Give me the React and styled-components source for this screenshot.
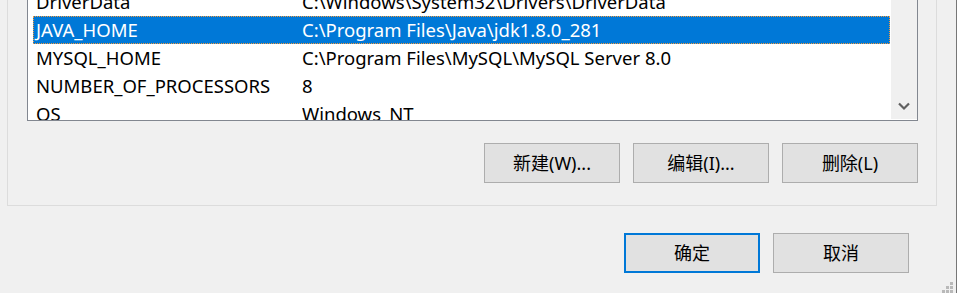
import React from 'react';
import styled, { createGlobalStyle } from 'styled-components';

const GlobalStyle = createGlobalStyle`
  html, body {
    margin: 0;
    padding: 0;
    background: #f0f0f0;
  }
  * {
    box-sizing: border-box;
  }
`;

const Window = styled.div`
  position: relative;
  width: 957px;
  height: 293px;
  overflow: hidden;
  background: #f0f0f0;
  border-right: 1px solid #767676;
  font-family: "Noto Sans", "Noto Sans CJK SC", sans-serif;
  font-size: 18px;
  color: #000;

  &::after {
    content: '';
    position: absolute;
    right: -1px;
    top: 222px;
    width: 1px;
    height: 8px;
    background: #2a6db0;
  }
`;

const GroupBox = styled.div`
  width: 930px;
  margin: -34px 0 0 7px;
  padding: 20px 18px 22px 19px;
  border: 1px solid #dcdcdc;
`;

const ListBox = styled.div`
  display: flex;
  height: 134px;
  background: #fff;
  border: 1px solid #828790;
`;

const Rows = styled.div`
  flex: 1;
  padding: 0 1px 0 5px;
  overflow: hidden;
`;

const Row = styled.div`
  display: flex;
  flex-shrink: 0;
  height: 28px;
  line-height: 26px;
  font-size: 18.5px;
  white-space: nowrap;
  border: 1px solid ${p => (p.$selected ? '#f39a3c' : 'transparent')};
  border-style: ${p => (p.$selected ? 'dotted' : 'solid')};
  background: ${p => (p.$selected ? '#0078d7' : 'transparent')};
  color: ${p => (p.$selected ? '#fff' : '#000')};
`;

const NameCell = styled.div`
  width: 268px;
  padding-left: 2px;
  overflow: hidden;
`;

const ValueCell = styled.div`
  flex: 1;
  overflow: hidden;
`;

const ScrollBar = styled.div`
  width: 26px;
  margin-bottom: 1px;
  background: #f0f0f0;
  display: flex;
  flex-direction: column;
  justify-content: flex-end;
`;

const ArrowButton = styled.div`
  height: 26px;
  display: flex;
  align-items: center;
  justify-content: center;
`;

const ButtonRow = styled.div`
  display: flex;
  justify-content: flex-end;
  gap: 13px;
  margin-top: 22px;
`;

const Button = styled.button`
  width: 136px;
  height: 40px;
  padding: 0;
  background: #e1e1e1;
  border: ${p => (p.$default ? '2px solid #0078d7' : '1px solid #adadad')};
  font-family: "Noto Sans", "Noto Sans CJK SC", sans-serif;
  font-size: 18px;
  color: #000;
  line-height: 1;
`;

const Footer = styled.div`
  display: flex;
  justify-content: flex-end;
  gap: 13px;
  margin-top: 27px;
  padding-right: 47px;
`;

const Grip = styled.svg`
  position: absolute;
  right: 2px;
  bottom: 0;
`;

const rows = [
  ['DriverData', 'C:\\Windows\\System32\\Drivers\\DriverData'],
  ['JAVA_HOME', 'C:\\Program Files\\Java\\jdk1.8.0_281', true],
  ['MYSQL_HOME', 'C:\\Program Files\\MySQL\\MySQL Server 8.0'],
  ['NUMBER_OF_PROCESSORS', '8'],
  ['OS', 'Windows_NT'],
];

export default function App() {
  return (
    <Window>
      <GlobalStyle />
      <GroupBox>
        <ListBox>
          <Rows>
            {rows.map(([name, value, sel]) => (
              <Row key={name} $selected={sel}>
                <NameCell>{name}</NameCell>
                <ValueCell>{value}</ValueCell>
              </Row>
            ))}
          </Rows>
          <ScrollBar>
            <ArrowButton>
              <svg width="12" height="9" viewBox="0 0 12 9">
                <path d="M1 1.5 L6 6.5 L11 1.5" fill="none" stroke="#606060" strokeWidth="2.2" />
              </svg>
            </ArrowButton>
          </ScrollBar>
        </ListBox>
        <ButtonRow>
          <Button>新建(W)...</Button>
          <Button>编辑(I)...</Button>
          <Button>删除(L)</Button>
        </ButtonRow>
      </GroupBox>
      <Footer>
        <Button $default>确定</Button>
        <Button>取消</Button>
      </Footer>
      <Grip width="12" height="11" viewBox="0 0 12 11">
        <g fill="#b9b9b9">
          <rect x="8" y="0" width="3" height="3" />
          <rect x="4" y="4" width="3" height="3" />
          <rect x="8" y="4" width="3" height="3" />
          <rect x="0" y="8" width="3" height="3" />
          <rect x="4" y="8" width="3" height="3" />
          <rect x="8" y="8" width="3" height="3" />
        </g>
      </Grip>
    </Window>
  );
}
